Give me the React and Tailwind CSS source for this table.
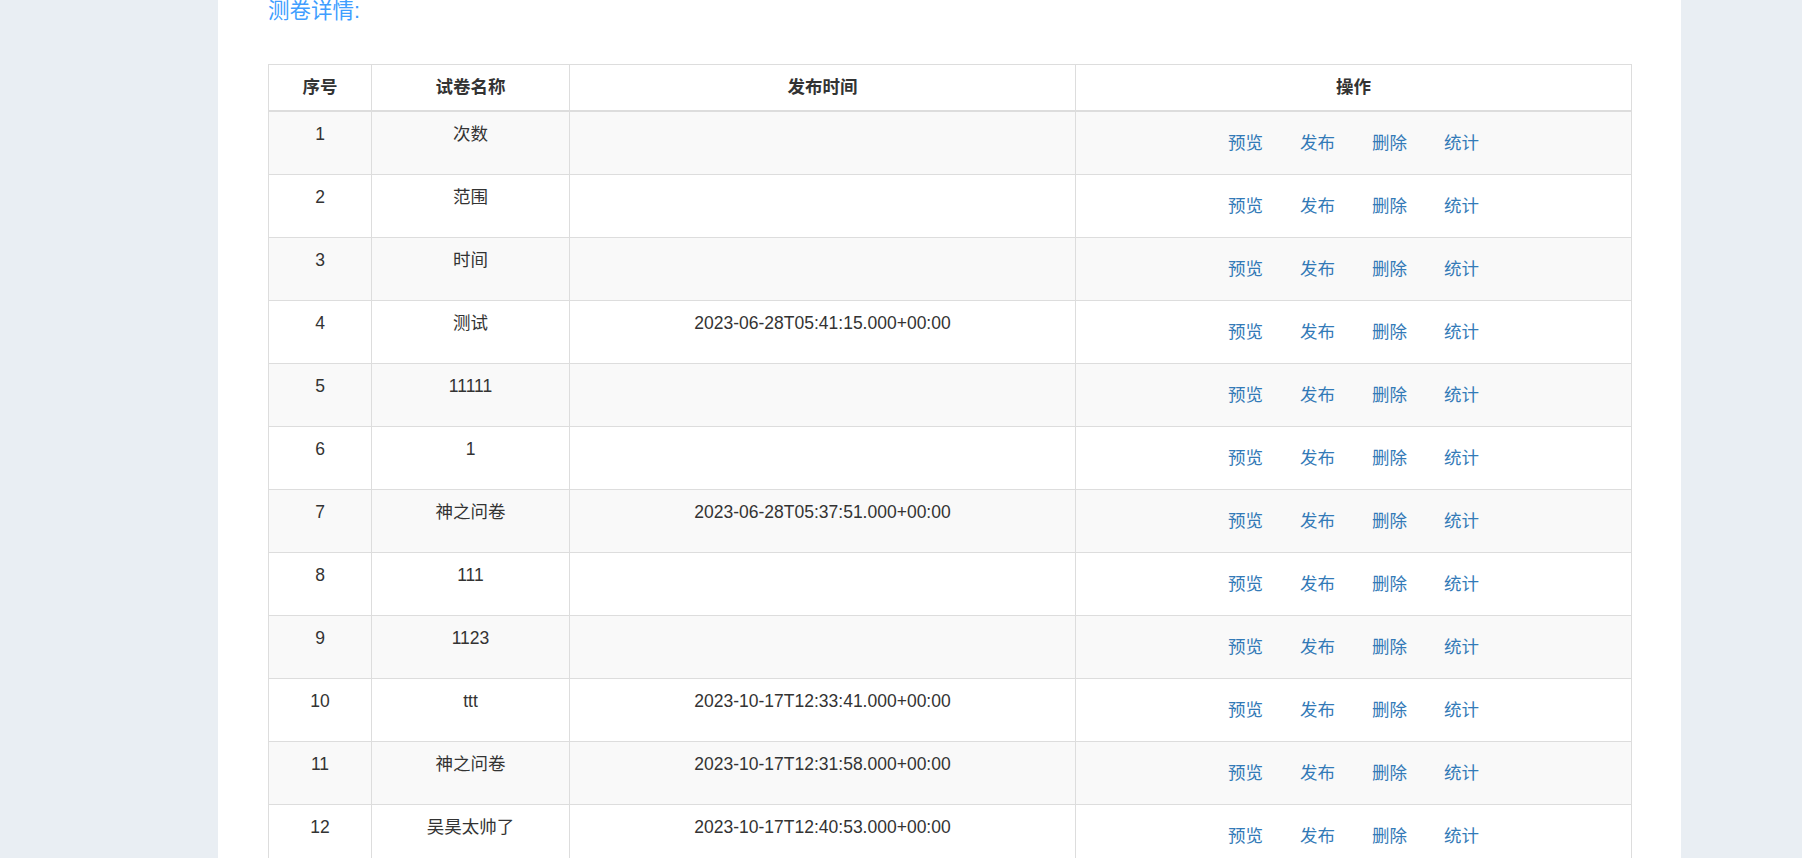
import React from 'react';

const papers = [
  { id: 1, name: '次数', time: '' },
  { id: 2, name: '范围', time: '' },
  { id: 3, name: '时间', time: '' },
  { id: 4, name: '测试', time: '2023-06-28T05:41:15.000+00:00' },
  { id: 5, name: '11111', time: '' },
  { id: 6, name: '1', time: '' },
  { id: 7, name: '神之问卷', time: '2023-06-28T05:37:51.000+00:00' },
  { id: 8, name: '111', time: '' },
  { id: 9, name: '1123', time: '' },
  { id: 10, name: 'ttt', time: '2023-10-17T12:33:41.000+00:00' },
  { id: 11, name: '神之问卷', time: '2023-10-17T12:31:58.000+00:00' },
  { id: 12, name: '吴昊太帅了', time: '2023-10-17T12:40:53.000+00:00' },
];

const actions = ['预览', '发布', '删除', '统计'];

export default function App() {
  return (
    <div
      className="h-[858px] overflow-hidden bg-[#e9eef3] text-[#333]"
      style={{ fontFamily: '"Liberation Sans", Arial, "Noto Sans CJK SC", sans-serif' }}
    >
      <div className="ml-[218px] w-[1463px] h-full bg-white px-[50px]">
        <div className="text-[21.5px] leading-[22px] text-[#409eff] mb-[42px]">测卷详情:</div>
        <table className="w-[1363px] table-fixed border-collapse text-[17.5px] leading-[25px]">
          <thead>
            <tr>
              <th className="w-[103px] border border-[#ddd] border-b-2 py-[10px] px-[10px] font-bold text-center">序号</th>
              <th className="w-[198px] border border-[#ddd] border-b-2 py-[10px] px-[10px] font-bold text-center">试卷名称</th>
              <th className="w-[506px] border border-[#ddd] border-b-2 py-[10px] px-[10px] font-bold text-center">发布时间</th>
              <th className="w-[556px] border border-[#ddd] border-b-2 py-[10px] px-[10px] font-bold text-center">操作</th>
            </tr>
          </thead>
          <tbody>
            {papers.map((p, i) => (
              <tr key={p.id} className={i % 2 === 0 ? 'bg-[#f9f9f9]' : 'bg-white'}>
                <td className="border border-[#ddd] py-[10px] px-[10px] text-center align-top">{p.id}</td>
                <td className="border border-[#ddd] py-[10px] px-[10px] text-center align-top">{p.name}</td>
                <td className="border border-[#ddd] py-[10px] px-[10px] text-center align-top">{p.time}</td>
                <td className="border border-[#ddd] py-[10px] px-[10px] text-center align-top">
                  <div className="flex justify-center gap-[5px]">
                    {actions.map((a) => (
                      <button
                        key={a}
                        className="border border-transparent px-[15px] py-[7.5px] leading-[25px] text-[#337ab7] hover:underline"
                      >
                        {a}
                      </button>
                    ))}
                  </div>
                </td>
              </tr>
            ))}
          </tbody>
        </table>
      </div>
    </div>
  );
}
